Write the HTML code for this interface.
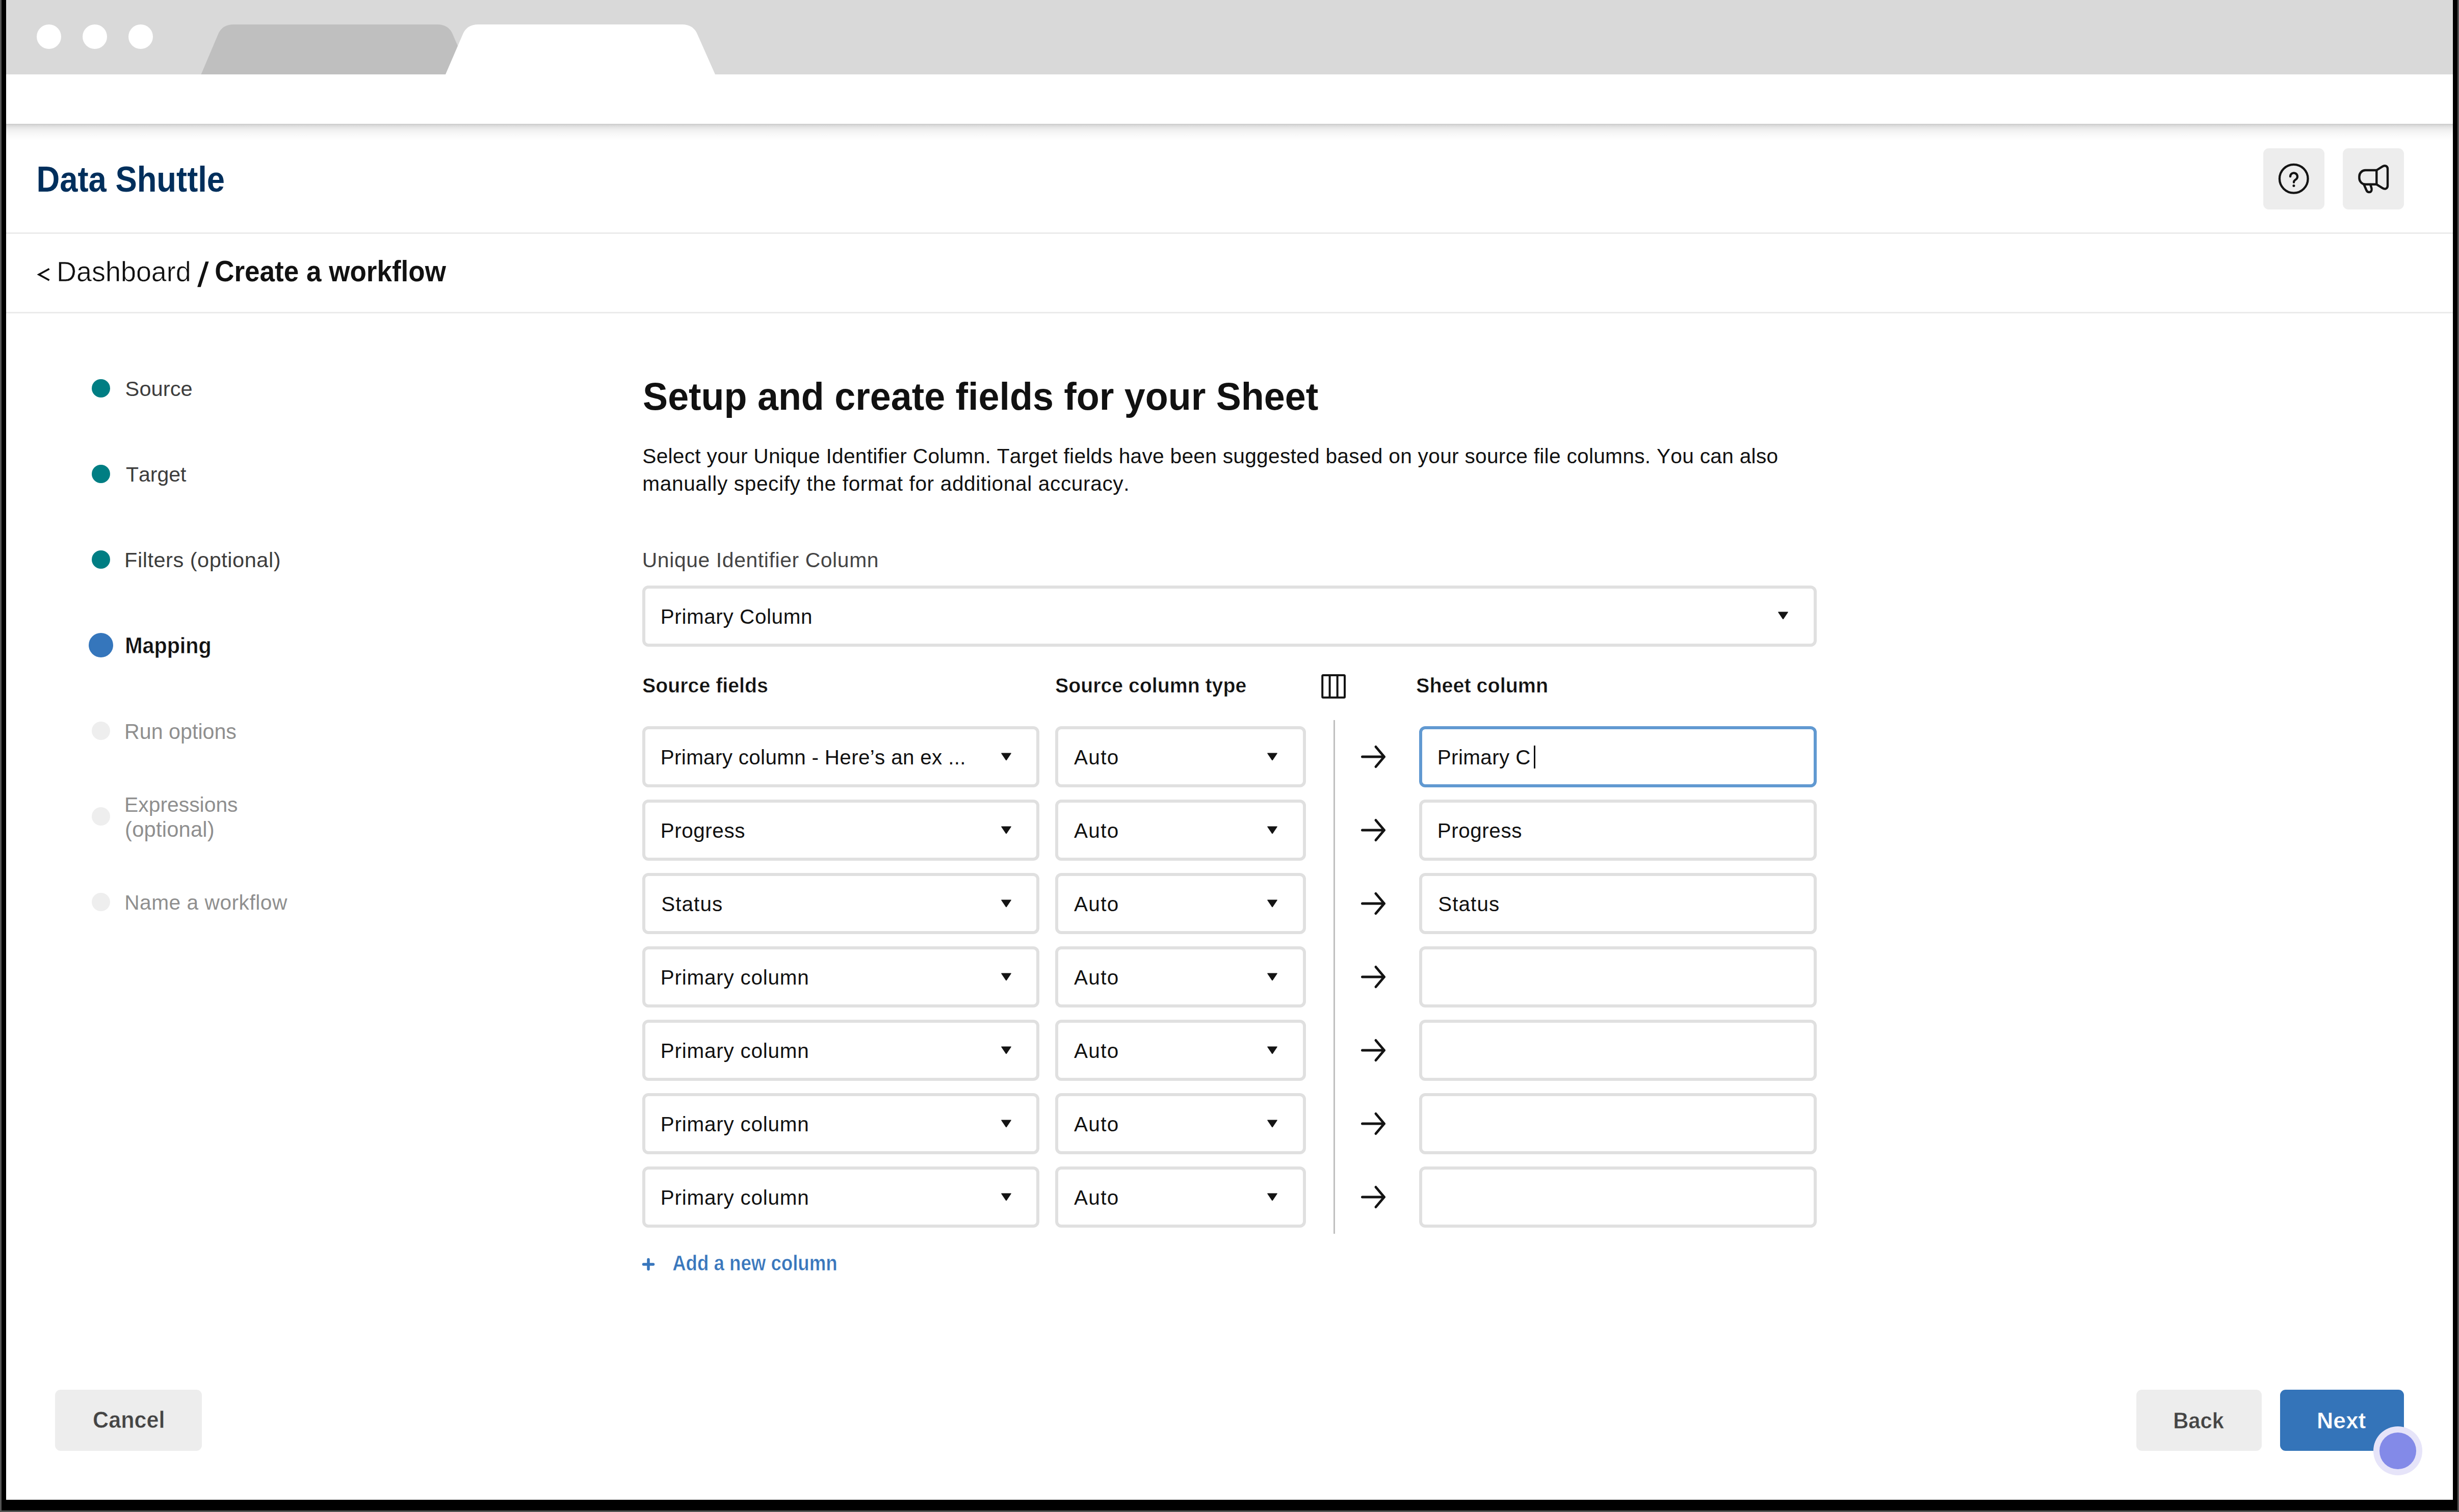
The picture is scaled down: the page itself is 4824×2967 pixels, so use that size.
<!DOCTYPE html>
<html><head><meta charset="utf-8"><title>Data Shuttle</title>
<style>
html,body{margin:0;padding:0}
body{width:4824px;height:2967px;background:#000;overflow:hidden;position:relative;font-family:"Liberation Sans",sans-serif;font-kerning:none}
#page{position:absolute;left:12px;top:0;width:4800px;height:2943px;background:#fff;overflow:hidden}
.r{position:absolute}
.t{position:absolute;white-space:nowrap}
</style></head><body>
<div id="page"></div>
<div class="r" style="left:0;top:0;width:3px;height:2967px;background:#555"></div>
<div class="r" style="left:4821px;top:0;width:3px;height:2967px;background:#555"></div>
<div class="r" style="left:0;top:2964px;width:4824px;height:3px;background:#555"></div>
<div class="r" style="left:12px;top:0;width:4800px;height:146px;background:#d9d9d9"></div>
<div class="r" style="left:72px;top:48px;width:48px;height:48px;border-radius:50%;background:#fff"></div>
<div class="r" style="left:162px;top:48px;width:48px;height:48px;border-radius:50%;background:#fff"></div>
<div class="r" style="left:252px;top:48px;width:48px;height:48px;border-radius:50%;background:#fff"></div>
<svg class="r" style="left:0;top:0" width="1500" height="150" viewBox="0 0 1500 150">
<path d="M394.5,146 L428,67 Q436,48 458,48 L858,48 Q880,48 888,67 L922,146 Z" fill="#bfbfbf"/>
<path d="M874,146 L908,67 Q916,48 938,48 L1338,48 Q1360,48 1368,67 L1403,146 Z" fill="#ffffff"/>
</svg>
<div class="r" style="left:12px;top:243px;width:4800px;height:32px;background:linear-gradient(#c8c8c8 0px,#d9d9d9 3px,#e6e6e6 7px,#f0f0f0 12px,#f8f8f8 20px,#ffffff 32px)"></div>
<div class="t" style="left:71.06px;top:312px;font-size:70.93px;line-height:79px;font-weight:700;color:#002f5c;letter-spacing:0.000px;transform:scaleX(0.8932);transform-origin:4.74px 0;">Data Shuttle</div>
<div class="r" style="left:4440px;top:291px;width:120px;height:120px;border-radius:11px;background:#ededed"></div>
<div class="r" style="left:4596px;top:291px;width:120px;height:120px;border-radius:11px;background:#ededed"></div>
<svg class="r" style="left:4440px;top:291px" width="120" height="120" viewBox="0 0 120 120" fill="none" stroke="#141414" stroke-width="4.3" stroke-linecap="round" stroke-linejoin="round">
<circle cx="59.75" cy="59.75" r="27.8"/>
<path d="M53,55.4 A7,7 0 1 1 64.95,60.35 L62,62.6 Q60,64.2 60,66.8"/>
<circle cx="59.9" cy="73.4" r="2.5" fill="#141414" stroke="none"/>
</svg>
<svg class="r" style="left:4596px;top:291px" width="120" height="120" viewBox="0 0 120 120" fill="none" stroke="#141414" stroke-width="4.4" stroke-linecap="round" stroke-linejoin="round">
<path d="M66.3,43 H44.6 A12.2,12.2 0 0 0 32.4,55.2 V58.6 A12.2,12.2 0 0 0 44.6,70.8 H66.3 Z"/>
<path d="M66.3,43 L78,35.6 C82,33 88,33.8 88,40.5 V73.3 C88,80 82,80.8 78,78.2 L66.3,70.8"/>
<path d="M41.5,71 L46.5,82.5 C48.5,87 54.5,87.5 56.3,83 C57,81 56.8,79.5 56.2,77.5 L54.2,71"/>
</svg>
<div class="r" style="left:12px;top:456px;width:4800px;height:3px;background:#ebebeb"></div>
<svg class="r" style="left:60px;top:515px" width="50" height="50" viewBox="60 515 50 50" fill="none" stroke="#111" stroke-width="3.6" stroke-linejoin="miter"><path d="M96.6,527.6 L76.2,538.7 L96.6,549.8"/></svg>
<div class="t" style="left:110.77px;top:502px;font-size:55.23px;line-height:62px;font-weight:400;color:#111;letter-spacing:0.000px;transform:scaleX(0.9759);transform-origin:4.53px 0;-webkit-text-stroke:0.6px #fff;">Dashboard</div>
<svg class="r" style="left:380px;top:505px" width="40" height="70" viewBox="380 505 40 70"><path d="M403.2,513.2 H409.6 L393.8,563.2 H387.1 Z" fill="#111"/></svg>
<div class="t" style="left:420.97px;top:501px;font-size:56.69px;line-height:63px;font-weight:700;color:#111;letter-spacing:0.000px;transform:scaleX(0.9354);transform-origin:2.33px 0;">Create a workflow</div>
<div class="r" style="left:12px;top:612px;width:4800px;height:3px;background:#ebebeb"></div>
<div class="r" style="left:179.8px;top:743.5px;width:36px;height:36px;border-radius:50%;background:#007e83"></div>
<div class="t" style="left:245.61px;top:739px;font-size:41.57px;line-height:47px;font-weight:400;color:#3d3d3d;letter-spacing:0.064px;">Source</div>
<div class="r" style="left:179.8px;top:911.7px;width:36px;height:36px;border-radius:50%;background:#007e83"></div>
<div class="t" style="left:246.57px;top:907px;font-size:41.57px;line-height:47px;font-weight:400;color:#3d3d3d;letter-spacing:0.000px;transform:scaleX(0.9865);transform-origin:0.93px 0;">Target</div>
<div class="r" style="left:179.8px;top:1079.9px;width:36px;height:36px;border-radius:50%;background:#007e83"></div>
<div class="t" style="left:244.09px;top:1075px;font-size:41.57px;line-height:47px;font-weight:400;color:#3d3d3d;letter-spacing:0.498px;">Filters (optional)</div>
<div class="r" style="left:173.8px;top:1242.0px;width:48px;height:48px;border-radius:50%;background:#3576bc"></div>
<div class="t" style="left:244.51px;top:1242px;font-size:44.62px;line-height:49px;font-weight:700;color:#111;letter-spacing:0.000px;transform:scaleX(0.9242);transform-origin:2.99px 0;-webkit-text-stroke:0.5px #fff;">Mapping</div>
<div class="r" style="left:179.8px;top:1415.8px;width:36px;height:36px;border-radius:50%;background:#eeeeee"></div>
<div class="t" style="left:244.03px;top:1412px;font-size:42.30px;line-height:47px;font-weight:400;color:#8f8f8f;letter-spacing:0.000px;transform:scaleX(0.9740);transform-origin:3.47px 0;">Run options</div>
<div class="r" style="left:179.8px;top:1752.0px;width:36px;height:36px;border-radius:50%;background:#eeeeee"></div>
<div class="t" style="left:244.16px;top:1748px;font-size:40.70px;line-height:46px;font-weight:400;color:#8f8f8f;letter-spacing:0.509px;">Name a workflow</div>
<div class="r" style="left:179.8px;top:1583.8px;width:36px;height:36px;border-radius:50%;background:#eeeeee"></div>
<div class="t" style="left:244.30px;top:1555px;font-size:41.43px;line-height:47px;font-weight:400;color:#8f8f8f;letter-spacing:0.000px;transform:scaleX(0.9862);transform-origin:3.40px 0;">Expressions</div>
<div class="t" style="left:245.11px;top:1604px;font-size:41.72px;line-height:47px;font-weight:400;color:#8f8f8f;letter-spacing:0.174px;">(optional)</div>
<div class="t" style="left:1260.59px;top:735px;font-size:76.60px;line-height:85px;font-weight:700;color:#111;letter-spacing:0.000px;transform:scaleX(0.9609);transform-origin:2.21px 0;">Setup and create fields for your Sheet</div>
<div class="t" style="left:1260.25px;top:872px;font-size:40.70px;line-height:46px;font-weight:400;color:#111;letter-spacing:0.269px;">Select your Unique Identifier Column. Target fields have been suggested based on your source file columns. You can also</div>
<div class="t" style="left:1260.31px;top:926px;font-size:40.55px;line-height:46px;font-weight:400;color:#111;letter-spacing:0.657px;">manually specify the format for additional accuracy.</div>
<div class="t" style="left:1259.75px;top:1076px;font-size:40.84px;line-height:46px;font-weight:400;color:#444;letter-spacing:0.625px;">Unique Identifier Column</div>
<div class="r" style="left:1260px;top:1149px;width:2304px;height:120px;box-sizing:border-box;border:6px solid #e0e0e0;border-radius:12px;background:#fff"></div>
<div class="t" style="left:1295.79px;top:1187px;font-size:40.41px;line-height:46px;font-weight:400;color:#111;letter-spacing:0.615px;">Primary Column</div>
<svg class="r" style="left:3487px;top:1199.2px" width="22" height="18" viewBox="0 0 22 18"><path d="M2,1.5 H20 Q21.5,1.5 20.6,2.8 L12,15.5 Q11,16.8 10,15.5 L1.4,2.8 Q0.5,1.5 2,1.5 Z" fill="#141414"/></svg>
<div class="t" style="left:1259.81px;top:1322px;font-size:41.13px;line-height:46px;font-weight:700;color:#111;letter-spacing:0.000px;transform:scaleX(0.9552);transform-origin:1.19px 0;-webkit-text-stroke:0.5px #fff;">Source fields</div>
<div class="t" style="left:2070.41px;top:1322px;font-size:41.13px;line-height:46px;font-weight:700;color:#111;letter-spacing:0.000px;transform:scaleX(0.9545);transform-origin:1.19px 0;-webkit-text-stroke:0.5px #fff;">Source column type</div>
<div class="t" style="left:2778.31px;top:1322px;font-size:41.13px;line-height:46px;font-weight:700;color:#111;letter-spacing:0.000px;transform:scaleX(0.9606);transform-origin:1.19px 0;-webkit-text-stroke:0.5px #fff;">Sheet column</div>
<svg class="r" style="left:2588px;top:1320px" width="56" height="56" viewBox="0 0 56 56" fill="none" stroke="#141414" stroke-width="4" stroke-linejoin="round">
<rect x="6.2" y="5" width="43.8" height="43.8" rx="1.5"/><path d="M20.6,5 V48.8 M35.65,5 V48.8"/></svg>
<div class="r" style="left:2616px;top:1413px;width:3px;height:1008px;background:#bfbfbf"></div>
<div class="r" style="left:1260px;top:1425px;width:779px;height:120px;box-sizing:border-box;border:6px solid #e0e0e0;border-radius:12px;background:#fff"></div>
<div class="r" style="left:2070px;top:1425px;width:492px;height:120px;box-sizing:border-box;border:6px solid #e0e0e0;border-radius:12px;background:#fff"></div>
<div class="r" style="left:2784px;top:1425px;width:780px;height:120px;box-sizing:border-box;border:6px solid #6199d1;border-radius:12px;background:#fff"></div>
<div class="t" style="left:1295.79px;top:1463px;font-size:40.41px;line-height:46px;font-weight:400;color:#111;letter-spacing:0.325px;">Primary column - Here’s an ex ...</div>
<svg class="r" style="left:1963px;top:1475.5px" width="22" height="18" viewBox="0 0 22 18"><path d="M2,1.5 H20 Q21.5,1.5 20.6,2.8 L12,15.5 Q11,16.8 10,15.5 L1.4,2.8 Q0.5,1.5 2,1.5 Z" fill="#141414"/></svg>
<div class="t" style="left:2107.02px;top:1463px;font-size:40.41px;line-height:46px;font-weight:400;color:#111;letter-spacing:1.384px;">Auto</div>
<svg class="r" style="left:2485px;top:1475.5px" width="22" height="18" viewBox="0 0 22 18"><path d="M2,1.5 H20 Q21.5,1.5 20.6,2.8 L12,15.5 Q11,16.8 10,15.5 L1.4,2.8 Q0.5,1.5 2,1.5 Z" fill="#141414"/></svg>
<div class="t" style="left:2819.79px;top:1463px;font-size:40.41px;line-height:46px;font-weight:400;color:#111;letter-spacing:0.384px;">Primary C</div>
<svg class="r" style="left:2660px;top:1455px" width="70" height="60" viewBox="0 0 70 60" fill="none" stroke="#141414" stroke-width="5" stroke-linecap="round" stroke-linejoin="round"><path d="M12.5,30 H55.5 M39,10.5 L55.5,30 L39,49.5"/></svg>
<div class="r" style="left:1260px;top:1569px;width:779px;height:120px;box-sizing:border-box;border:6px solid #e0e0e0;border-radius:12px;background:#fff"></div>
<div class="r" style="left:2070px;top:1569px;width:492px;height:120px;box-sizing:border-box;border:6px solid #e0e0e0;border-radius:12px;background:#fff"></div>
<div class="r" style="left:2784px;top:1569px;width:780px;height:120px;box-sizing:border-box;border:6px solid #e0e0e0;border-radius:12px;background:#fff"></div>
<div class="t" style="left:1295.79px;top:1607px;font-size:40.41px;line-height:46px;font-weight:400;color:#111;letter-spacing:0.555px;">Progress</div>
<svg class="r" style="left:1963px;top:1619.5px" width="22" height="18" viewBox="0 0 22 18"><path d="M2,1.5 H20 Q21.5,1.5 20.6,2.8 L12,15.5 Q11,16.8 10,15.5 L1.4,2.8 Q0.5,1.5 2,1.5 Z" fill="#141414"/></svg>
<div class="t" style="left:2107.02px;top:1607px;font-size:40.41px;line-height:46px;font-weight:400;color:#111;letter-spacing:1.384px;">Auto</div>
<svg class="r" style="left:2485px;top:1619.5px" width="22" height="18" viewBox="0 0 22 18"><path d="M2,1.5 H20 Q21.5,1.5 20.6,2.8 L12,15.5 Q11,16.8 10,15.5 L1.4,2.8 Q0.5,1.5 2,1.5 Z" fill="#141414"/></svg>
<div class="t" style="left:2819.79px;top:1607px;font-size:40.41px;line-height:46px;font-weight:400;color:#111;letter-spacing:0.555px;">Progress</div>
<svg class="r" style="left:2660px;top:1599px" width="70" height="60" viewBox="0 0 70 60" fill="none" stroke="#141414" stroke-width="5" stroke-linecap="round" stroke-linejoin="round"><path d="M12.5,30 H55.5 M39,10.5 L55.5,30 L39,49.5"/></svg>
<div class="r" style="left:1260px;top:1713px;width:779px;height:120px;box-sizing:border-box;border:6px solid #e0e0e0;border-radius:12px;background:#fff"></div>
<div class="r" style="left:2070px;top:1713px;width:492px;height:120px;box-sizing:border-box;border:6px solid #e0e0e0;border-radius:12px;background:#fff"></div>
<div class="r" style="left:2784px;top:1713px;width:780px;height:120px;box-sizing:border-box;border:6px solid #e0e0e0;border-radius:12px;background:#fff"></div>
<div class="t" style="left:1297.27px;top:1751px;font-size:40.41px;line-height:46px;font-weight:400;color:#111;letter-spacing:1.068px;">Status</div>
<svg class="r" style="left:1963px;top:1763.5px" width="22" height="18" viewBox="0 0 22 18"><path d="M2,1.5 H20 Q21.5,1.5 20.6,2.8 L12,15.5 Q11,16.8 10,15.5 L1.4,2.8 Q0.5,1.5 2,1.5 Z" fill="#141414"/></svg>
<div class="t" style="left:2107.02px;top:1751px;font-size:40.41px;line-height:46px;font-weight:400;color:#111;letter-spacing:1.384px;">Auto</div>
<svg class="r" style="left:2485px;top:1763.5px" width="22" height="18" viewBox="0 0 22 18"><path d="M2,1.5 H20 Q21.5,1.5 20.6,2.8 L12,15.5 Q11,16.8 10,15.5 L1.4,2.8 Q0.5,1.5 2,1.5 Z" fill="#141414"/></svg>
<div class="t" style="left:2821.27px;top:1751px;font-size:40.41px;line-height:46px;font-weight:400;color:#111;letter-spacing:1.068px;">Status</div>
<svg class="r" style="left:2660px;top:1743px" width="70" height="60" viewBox="0 0 70 60" fill="none" stroke="#141414" stroke-width="5" stroke-linecap="round" stroke-linejoin="round"><path d="M12.5,30 H55.5 M39,10.5 L55.5,30 L39,49.5"/></svg>
<div class="r" style="left:1260px;top:1857px;width:779px;height:120px;box-sizing:border-box;border:6px solid #e0e0e0;border-radius:12px;background:#fff"></div>
<div class="r" style="left:2070px;top:1857px;width:492px;height:120px;box-sizing:border-box;border:6px solid #e0e0e0;border-radius:12px;background:#fff"></div>
<div class="r" style="left:2784px;top:1857px;width:780px;height:120px;box-sizing:border-box;border:6px solid #e0e0e0;border-radius:12px;background:#fff"></div>
<div class="t" style="left:1295.79px;top:1895px;font-size:40.41px;line-height:46px;font-weight:400;color:#111;letter-spacing:0.783px;">Primary column</div>
<svg class="r" style="left:1963px;top:1907.5px" width="22" height="18" viewBox="0 0 22 18"><path d="M2,1.5 H20 Q21.5,1.5 20.6,2.8 L12,15.5 Q11,16.8 10,15.5 L1.4,2.8 Q0.5,1.5 2,1.5 Z" fill="#141414"/></svg>
<div class="t" style="left:2107.02px;top:1895px;font-size:40.41px;line-height:46px;font-weight:400;color:#111;letter-spacing:1.384px;">Auto</div>
<svg class="r" style="left:2485px;top:1907.5px" width="22" height="18" viewBox="0 0 22 18"><path d="M2,1.5 H20 Q21.5,1.5 20.6,2.8 L12,15.5 Q11,16.8 10,15.5 L1.4,2.8 Q0.5,1.5 2,1.5 Z" fill="#141414"/></svg>
<svg class="r" style="left:2660px;top:1887px" width="70" height="60" viewBox="0 0 70 60" fill="none" stroke="#141414" stroke-width="5" stroke-linecap="round" stroke-linejoin="round"><path d="M12.5,30 H55.5 M39,10.5 L55.5,30 L39,49.5"/></svg>
<div class="r" style="left:1260px;top:2001px;width:779px;height:120px;box-sizing:border-box;border:6px solid #e0e0e0;border-radius:12px;background:#fff"></div>
<div class="r" style="left:2070px;top:2001px;width:492px;height:120px;box-sizing:border-box;border:6px solid #e0e0e0;border-radius:12px;background:#fff"></div>
<div class="r" style="left:2784px;top:2001px;width:780px;height:120px;box-sizing:border-box;border:6px solid #e0e0e0;border-radius:12px;background:#fff"></div>
<div class="t" style="left:1295.79px;top:2039px;font-size:40.41px;line-height:46px;font-weight:400;color:#111;letter-spacing:0.783px;">Primary column</div>
<svg class="r" style="left:1963px;top:2051.5px" width="22" height="18" viewBox="0 0 22 18"><path d="M2,1.5 H20 Q21.5,1.5 20.6,2.8 L12,15.5 Q11,16.8 10,15.5 L1.4,2.8 Q0.5,1.5 2,1.5 Z" fill="#141414"/></svg>
<div class="t" style="left:2107.02px;top:2039px;font-size:40.41px;line-height:46px;font-weight:400;color:#111;letter-spacing:1.384px;">Auto</div>
<svg class="r" style="left:2485px;top:2051.5px" width="22" height="18" viewBox="0 0 22 18"><path d="M2,1.5 H20 Q21.5,1.5 20.6,2.8 L12,15.5 Q11,16.8 10,15.5 L1.4,2.8 Q0.5,1.5 2,1.5 Z" fill="#141414"/></svg>
<svg class="r" style="left:2660px;top:2031px" width="70" height="60" viewBox="0 0 70 60" fill="none" stroke="#141414" stroke-width="5" stroke-linecap="round" stroke-linejoin="round"><path d="M12.5,30 H55.5 M39,10.5 L55.5,30 L39,49.5"/></svg>
<div class="r" style="left:1260px;top:2145px;width:779px;height:120px;box-sizing:border-box;border:6px solid #e0e0e0;border-radius:12px;background:#fff"></div>
<div class="r" style="left:2070px;top:2145px;width:492px;height:120px;box-sizing:border-box;border:6px solid #e0e0e0;border-radius:12px;background:#fff"></div>
<div class="r" style="left:2784px;top:2145px;width:780px;height:120px;box-sizing:border-box;border:6px solid #e0e0e0;border-radius:12px;background:#fff"></div>
<div class="t" style="left:1295.79px;top:2183px;font-size:40.41px;line-height:46px;font-weight:400;color:#111;letter-spacing:0.783px;">Primary column</div>
<svg class="r" style="left:1963px;top:2195.5px" width="22" height="18" viewBox="0 0 22 18"><path d="M2,1.5 H20 Q21.5,1.5 20.6,2.8 L12,15.5 Q11,16.8 10,15.5 L1.4,2.8 Q0.5,1.5 2,1.5 Z" fill="#141414"/></svg>
<div class="t" style="left:2107.02px;top:2183px;font-size:40.41px;line-height:46px;font-weight:400;color:#111;letter-spacing:1.384px;">Auto</div>
<svg class="r" style="left:2485px;top:2195.5px" width="22" height="18" viewBox="0 0 22 18"><path d="M2,1.5 H20 Q21.5,1.5 20.6,2.8 L12,15.5 Q11,16.8 10,15.5 L1.4,2.8 Q0.5,1.5 2,1.5 Z" fill="#141414"/></svg>
<svg class="r" style="left:2660px;top:2175px" width="70" height="60" viewBox="0 0 70 60" fill="none" stroke="#141414" stroke-width="5" stroke-linecap="round" stroke-linejoin="round"><path d="M12.5,30 H55.5 M39,10.5 L55.5,30 L39,49.5"/></svg>
<div class="r" style="left:1260px;top:2289px;width:779px;height:120px;box-sizing:border-box;border:6px solid #e0e0e0;border-radius:12px;background:#fff"></div>
<div class="r" style="left:2070px;top:2289px;width:492px;height:120px;box-sizing:border-box;border:6px solid #e0e0e0;border-radius:12px;background:#fff"></div>
<div class="r" style="left:2784px;top:2289px;width:780px;height:120px;box-sizing:border-box;border:6px solid #e0e0e0;border-radius:12px;background:#fff"></div>
<div class="t" style="left:1295.79px;top:2327px;font-size:40.41px;line-height:46px;font-weight:400;color:#111;letter-spacing:0.783px;">Primary column</div>
<svg class="r" style="left:1963px;top:2339.5px" width="22" height="18" viewBox="0 0 22 18"><path d="M2,1.5 H20 Q21.5,1.5 20.6,2.8 L12,15.5 Q11,16.8 10,15.5 L1.4,2.8 Q0.5,1.5 2,1.5 Z" fill="#141414"/></svg>
<div class="t" style="left:2107.02px;top:2327px;font-size:40.41px;line-height:46px;font-weight:400;color:#111;letter-spacing:1.384px;">Auto</div>
<svg class="r" style="left:2485px;top:2339.5px" width="22" height="18" viewBox="0 0 22 18"><path d="M2,1.5 H20 Q21.5,1.5 20.6,2.8 L12,15.5 Q11,16.8 10,15.5 L1.4,2.8 Q0.5,1.5 2,1.5 Z" fill="#141414"/></svg>
<svg class="r" style="left:2660px;top:2319px" width="70" height="60" viewBox="0 0 70 60" fill="none" stroke="#141414" stroke-width="5" stroke-linecap="round" stroke-linejoin="round"><path d="M12.5,30 H55.5 M39,10.5 L55.5,30 L39,49.5"/></svg>
<div class="r" style="left:3008.5px;top:1463px;width:3.5px;height:45px;background:#111"></div>
<svg class="r" style="left:1250px;top:2461px" width="44" height="40" viewBox="0 0 44 40" fill="none" stroke="#3876bc" stroke-width="5.5" stroke-linecap="round"><path d="M12.5,20 H31.5 M22,10.5 V29.5"/></svg>
<div class="t" style="left:1319.14px;top:2455px;font-size:42.44px;line-height:47px;font-weight:700;color:#3876bc;letter-spacing:0.000px;transform:scaleX(0.8628);transform-origin:1.06px 0;-webkit-text-stroke:0.5px #fff;">Add a new column</div>
<div class="r" style="left:108px;top:2727px;width:288px;height:120px;border-radius:11px;background:#ededed"></div>
<div class="t" style="left:181.64px;top:2761px;font-size:45.35px;line-height:51px;font-weight:700;color:#444;letter-spacing:0.000px;transform:scaleX(0.9503);transform-origin:1.86px 0;-webkit-text-stroke:0.5px #ededed;">Cancel</div>
<div class="r" style="left:4191px;top:2727px;width:246px;height:120px;border-radius:11px;background:#ededed"></div>
<div class="t" style="left:4262.99px;top:2762px;font-size:45.06px;line-height:51px;font-weight:700;color:#444;letter-spacing:0.000px;transform:scaleX(0.9260);transform-origin:3.01px 0;-webkit-text-stroke:0.5px #ededed;">Back</div>
<div class="r" style="left:4473px;top:2727px;width:243px;height:120px;border-radius:11px;background:#3474b9"></div>
<div class="t" style="left:4545.29px;top:2762px;font-size:45.06px;line-height:51px;font-weight:700;color:#fff;letter-spacing:0.000px;transform:scaleX(0.9872);transform-origin:3.01px 0;-webkit-text-stroke:0.5px #3474b9;">Next</div>
<div class="r" style="left:4656.3px;top:2799.4px;width:95.6px;height:95.6px;border-radius:50%;background:#e6e4f9"></div>
<div class="r" style="left:4668.3px;top:2811.4px;width:71.6px;height:71.6px;border-radius:50%;background:#838ae8"></div>
</body></html>
